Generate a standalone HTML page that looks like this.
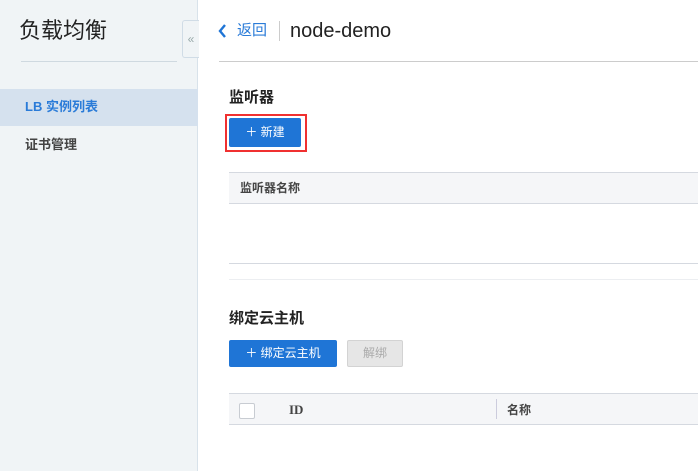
<!DOCTYPE html>
<html><head><meta charset="utf-8"><style>
*{margin:0;padding:0;box-sizing:border-box}
body{width:698px;height:471px;overflow:hidden;background:#fff;font-family:"Liberation Sans","Noto Sans CJK SC",sans-serif;position:relative;color:#222}
.a{position:absolute}
</style></head><body>
<div class="a" style="left:0;top:0;width:198px;height:471px;background:#f0f4f6;border-right:1px solid #d8e2ea"></div>
<div class="a" style="left:19px;top:16px;font-size:22px;color:#222;line-height:30px">负载均衡</div>
<div class="a" style="left:21px;top:61px;width:156px;height:1px;background:#cfd9e0"></div>
<div class="a" style="left:182px;top:20px;width:17px;height:38px;background:#f0f4f6;border:1px solid #d0dce6;border-right:none;border-radius:3px 0 0 3px;color:#9aa;font-size:12px;line-height:36px;text-align:center">«</div>
<div class="a" style="left:0;top:89px;width:198px;height:37px;background:#d5e1ee"></div>
<div class="a" style="left:25px;top:98px;font-size:13px;font-weight:bold;color:#2a7bd8;line-height:18px">LB 实例列表</div>
<div class="a" style="left:25px;top:136px;font-size:13px;font-weight:bold;color:#444;line-height:18px">证书管理</div>

<svg class="a" style="left:218px;top:23px" width="10" height="16"><path d="M7 2L2 8l5 6" stroke="#1f75d6" stroke-width="2.4" fill="none"/></svg>
<div class="a" style="left:237px;top:21px;font-size:15px;color:#2a7bd8;line-height:20px">返回</div>
<div class="a" style="left:279px;top:21px;width:1px;height:20px;background:#ccc"></div>
<div class="a" style="left:290px;top:17px;font-size:20px;color:#222;line-height:28px">node-demo</div>
<div class="a" style="left:219px;top:61px;width:479px;height:1px;background:#ccc"></div>

<div class="a" style="left:229px;top:88px;font-size:15px;font-weight:bold;line-height:20px">监听器</div>
<div class="a" style="left:225px;top:114px;width:82px;height:38px;border:2px solid #f03030"></div>
<div class="a" style="left:229px;top:118px;width:72px;height:29px;background:#1f75d6;border-radius:2px;color:#fff;font-size:12px;line-height:29px;text-align:center">＋ 新建</div>

<div class="a" style="left:229px;top:172px;width:469px;height:32px;background:#f5f6f8;border-top:1px solid #d5d9e0;border-bottom:1px solid #d5d9e0"></div>
<div class="a" style="left:240px;top:180px;font-size:12px;font-weight:bold;color:#444;line-height:16px">监听器名称</div>
<div class="a" style="left:229px;top:263px;width:469px;height:1px;background:#d5d9e0"></div>
<div class="a" style="left:229px;top:279px;width:469px;height:1px;background:#eceef1"></div>

<div class="a" style="left:229px;top:309px;font-size:15px;font-weight:bold;line-height:20px">绑定云主机</div>
<div class="a" style="left:229px;top:340px;width:108px;height:27px;background:#1f75d6;border-radius:2px;color:#fff;font-size:12px;line-height:27px;text-align:center">＋ 绑定云主机</div>
<div class="a" style="left:347px;top:340px;width:56px;height:27px;background:#e6e6e6;border:1px solid #d3d3d3;border-radius:2px;color:#aaa;font-size:12px;line-height:25px;text-align:center">解绑</div>

<div class="a" style="left:229px;top:393px;width:469px;height:32px;background:#f5f6f8;border-top:1px solid #d5d9e0;border-bottom:1px solid #d5d9e0"></div>
<div class="a" style="left:239px;top:403px;width:16px;height:16px;background:#fff;border:1px solid #c8ccd2;border-radius:2px"></div>
<div class="a" style="left:289px;top:401px;font-size:13px;font-weight:bold;color:#444;font-family:'Liberation Serif',serif;line-height:18px">ID</div>
<div class="a" style="left:496px;top:399px;width:1px;height:20px;background:#ccd"></div>
<div class="a" style="left:507px;top:401px;font-size:12px;font-weight:bold;color:#444;line-height:18px">名称</div>
</body></html>
